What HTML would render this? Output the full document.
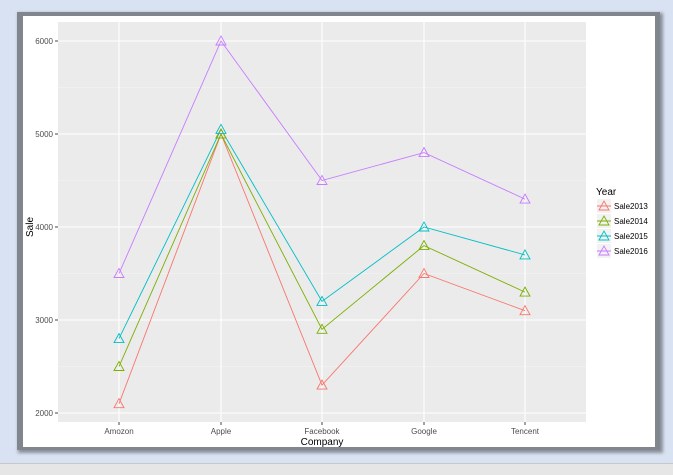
<!DOCTYPE html>
<html><head><style>
html,body{margin:0;padding:0;width:673px;height:475px;overflow:hidden;background:#d9e2f2;font-family:"Liberation Sans",Arial,sans-serif}
</style></head><body>
<svg width="673" height="475" xmlns="http://www.w3.org/2000/svg" font-family="Liberation Sans, Arial, sans-serif">
<defs><filter id="s" x="-5%" y="-5%" width="110%" height="110%"><feGaussianBlur stdDeviation="1.5"/></filter></defs>
<rect x="0" y="0" width="673" height="475" fill="#d9e2f2"/>
<rect x="18" y="13" width="645" height="440" fill="#8a8f99" filter="url(#s)"/>
<rect x="17" y="12" width="643" height="438" fill="#80858e"/>
<rect x="23" y="16" width="632" height="431" fill="#fff"/>
<rect x="0" y="463" width="673" height="12" fill="#e6e6e6"/>
<line x1="0" y1="463.5" x2="673" y2="463.5" stroke="#c8c8c8"/>
<rect x="58" y="22" width="528" height="400" fill="#ebebeb"/>
<g stroke="#f5f5f5" stroke-width="0.6">
<line x1="58" x2="586" y1="366.5" y2="366.5"/><line x1="58" x2="586" y1="273.5" y2="273.5"/><line x1="58" x2="586" y1="180.5" y2="180.5"/><line x1="58" x2="586" y1="87.5" y2="87.5"/>
</g>
<g stroke="#fff" stroke-width="1.1">
<line x1="58" x2="586" y1="413" y2="413"/><line x1="58" x2="586" y1="320" y2="320"/><line x1="58" x2="586" y1="227" y2="227"/><line x1="58" x2="586" y1="134" y2="134"/><line x1="58" x2="586" y1="41" y2="41"/>
<line x1="119" x2="119" y1="22" y2="422"/><line x1="221" x2="221" y1="22" y2="422"/><line x1="322" x2="322" y1="22" y2="422"/><line x1="424" x2="424" y1="22" y2="422"/><line x1="525" x2="525" y1="22" y2="422"/>
</g>
<g stroke="#444" stroke-width="1">
<line x1="55" x2="58" y1="413" y2="413"/><line x1="55" x2="58" y1="320" y2="320"/><line x1="55" x2="58" y1="227" y2="227"/><line x1="55" x2="58" y1="134" y2="134"/><line x1="55" x2="58" y1="41" y2="41"/>
<line x1="119" x2="119" y1="422" y2="425"/><line x1="221" x2="221" y1="422" y2="425"/><line x1="322" x2="322" y1="422" y2="425"/><line x1="424" x2="424" y1="422" y2="425"/><line x1="525" x2="525" y1="422" y2="425"/>
</g>
<g font-size="8" fill="#4d4d4d" text-anchor="end">
<text x="53" y="416">2000</text><text x="53" y="323">3000</text><text x="53" y="230">4000</text><text x="53" y="137">5000</text><text x="53" y="44">6000</text>
</g>
<g font-size="8" fill="#4d4d4d" text-anchor="middle">
<text x="119" y="434">Amozon</text><text x="221" y="434">Apple</text><text x="322" y="434">Facebook</text><text x="424" y="434">Google</text><text x="525" y="434">Tencent</text>
</g>
<text x="322" y="445" font-size="10" text-anchor="middle" fill="#000">Company</text>
<text transform="translate(33,227) rotate(-90)" font-size="10" text-anchor="middle" fill="#000">Sale</text>
<g fill="none" stroke-width="0.9">
<polyline stroke="#F8766D" points="119,403.7 221,134 322,385.1 424,273.5 525,310.7"/>
<polyline stroke="#7CAE00" points="119,366.5 221,134 322,329.3 424,245.6 525,292.1"/>
<polyline stroke="#00BFC4" points="119,338.6 221,129.4 322,301.4 424,227 525,254.9"/>
<polyline stroke="#C77CFF" points="119,273.5 221,41 322,180.5 424,152.6 525,199.1"/>
</g>
<g fill="none" stroke-width="0.9">
<g stroke="#F8766D">
<path d="M114,407.7L119,398.7L124,407.7Z"/><path d="M216,138L221,129L226,138Z"/><path d="M317,389.1L322,380.1L327,389.1Z"/><path d="M419,277.5L424,268.5L429,277.5Z"/><path d="M520,314.7L525,305.7L530,314.7Z"/>
</g>
<g stroke="#7CAE00">
<path d="M114,370.5L119,361.5L124,370.5Z"/><path d="M216,138L221,129L226,138Z"/><path d="M317,333.3L322,324.3L327,333.3Z"/><path d="M419,249.6L424,240.6L429,249.6Z"/><path d="M520,296.1L525,287.1L530,296.1Z"/>
</g>
<g stroke="#00BFC4">
<path d="M114,342.6L119,333.6L124,342.6Z"/><path d="M216,133.4L221,124.4L226,133.4Z"/><path d="M317,305.4L322,296.4L327,305.4Z"/><path d="M419,231L424,222L429,231Z"/><path d="M520,258.9L525,249.9L530,258.9Z"/>
</g>
<g stroke="#C77CFF">
<path d="M114,277.5L119,268.5L124,277.5Z"/><path d="M216,45L221,36L226,45Z"/><path d="M317,184.5L322,175.5L327,184.5Z"/><path d="M419,156.6L424,147.6L429,156.6Z"/><path d="M520,203.1L525,194.1L530,203.1Z"/>
</g>
</g>
<text x="596" y="195" font-size="10" fill="#000">Year</text>
<g>
<rect x="597" y="199" width="14" height="14" fill="#f2f2f2"/>
<rect x="597" y="214" width="14" height="14" fill="#f2f2f2"/>
<rect x="597" y="229" width="14" height="14" fill="#f2f2f2"/>
<rect x="597" y="244" width="14" height="14" fill="#f2f2f2"/>
</g>
<g fill="none" stroke-width="0.9">
<path stroke="#F8766D" d="M599,210L604,201L609,210Z M597,206H611"/>
<path stroke="#7CAE00" d="M599,225L604,216L609,225Z M597,221H611"/>
<path stroke="#00BFC4" d="M599,240L604,231L609,240Z M597,236H611"/>
<path stroke="#C77CFF" d="M599,255L604,246L609,255Z M597,251H611"/>
</g>
<g font-size="8" fill="#000">
<text x="614" y="209">Sale2013</text><text x="614" y="224">Sale2014</text><text x="614" y="239">Sale2015</text><text x="614" y="254">Sale2016</text>
</g>
</svg>
</body></html>
